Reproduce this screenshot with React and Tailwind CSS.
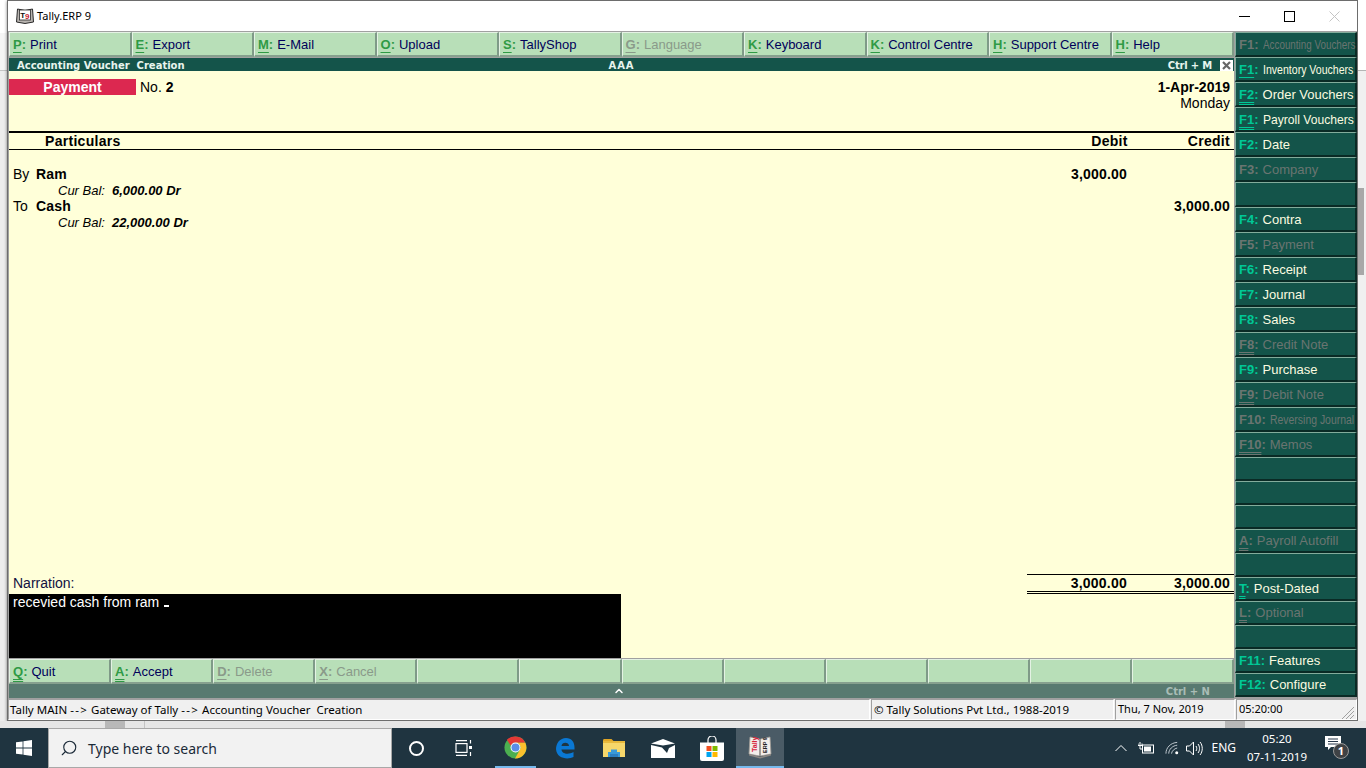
import React from 'react';
import { Search, ChevronUp } from 'lucide-react';

const topKeys = [
  ['P', 'Print', 1], ['E', 'Export', 1], ['M', 'E-Mail', 1], ['O', 'Upload', 1], ['S', 'TallyShop', 1],
  ['G', 'Language', 0], ['K', 'Keyboard', 1], ['K', 'Control Centre', 1], ['H', 'Support Centre', 1], ['H', 'Help', 1],
];

const bottomKeys = [
  ['Q', 'Quit', 1, 1], ['A', 'Accept', 1, 1], ['D', 'Delete', 0], ['X', 'Cancel', 0],
  [], [], [], [], [], [], [], [],
];

// key, label, enabled, underline (0 none, 1 single, 2 double), squeeze classes for long labels
const sideKeys = [
  ['F1', 'Accounting Vouchers', 0, 0, 'text-[12px] inline-block origin-left scale-x-[0.82]'],
  ['F1', 'Inventory Vouchers', 1, 1, 'text-[12px] inline-block origin-left scale-x-[0.88]'],
  ['F2', 'Order Vouchers', 1, 2], ['F1', 'Payroll Vouchers', 1, 2, 'inline-block origin-left scale-x-[0.93]'],
  ['F2', 'Date', 1, 0], ['F3', 'Company', 0, 0], [], ['F4', 'Contra', 1, 0], ['F5', 'Payment', 0, 0], ['F6', 'Receipt', 1, 0],
  ['F7', 'Journal', 1, 0], ['F8', 'Sales', 1, 0], ['F8', 'Credit Note', 0, 2], ['F9', 'Purchase', 1, 0], ['F9', 'Debit Note', 0, 2],
  ['F10', 'Reversing Journal', 0, 0, 'text-[12px] inline-block origin-left scale-x-[0.87]'], ['F10', 'Memos', 0, 2],
];

const sideKeysLower = [
  [], [], [], ['A', 'Payroll Autofill', 0, 2], [], ['T', 'Post-Dated', 1, 2], ['L', 'Optional', 0, 2], [],
  ['F11', 'Features', 1, 0], ['F12', 'Configure', 1, 0],
];

const arial = "font-['Liberation_Sans',Arial,sans-serif]";

const TopButton = ({ item }) => {
  const [k, label, on, dbl] = item;
  return (
    <div className={`h-[25px] flex items-center pl-[3px] pt-[1px] bg-[#b8dfb8] border-t border-l border-[#e4f2e4] border-r-2 border-r-[#7f9a88] border-b-2 border-b-[#86a08e] text-[13px] whitespace-nowrap ${arial}`}>
      {k && (
        <>
          <span className={`font-bold ${on ? 'text-[#2f9a45]' : 'text-[#8a9a8a]'}`}>
            <span className={`underline underline-offset-[3px] ${dbl ? 'decoration-double' : ''}`}>{k}</span>:
          </span>
          <span className={`ml-[4px] ${on ? 'text-[#00005a]' : 'text-[#8a9a8a]'}`}>{label}</span>
        </>
      )}
    </div>
  );
};

const SideButton = ({ item, tall }) => {
  const [k, label, on, line, squeeze] = item;
  const rule = line === 2 ? 'underline underline-offset-[3px] decoration-double' : line === 1 ? 'underline underline-offset-[3px]' : '';
  return (
    <div className={`${tall ? 'h-[25px] pt-[1px]' : 'h-[24px]'} flex items-center pl-[3px] bg-[#14544a] border-t border-l border-[#83ac9c] border-r-2 border-r-[#0a2a25] border-b-2 border-b-[#0a2a25] text-[13px] whitespace-nowrap ${arial}`}>
      {k && (
        <>
          <span className={`font-bold ${on ? 'text-[#00c896]' : 'text-[#6a7571]'}`}>
            <span className={rule}>{k}</span>:
          </span>
          <span className={`ml-[4px] ${squeeze || ''} ${on ? 'text-[#fbfbe0]' : 'text-[#6a7571]'}`}>{label}</span>
        </>
      )}
    </div>
  );
};

const Particular = ({ dir, name, bal, amount, side }) => (
  <>
    <div className="flex h-[16px] items-center text-[14px] text-black pl-[4px]">
      <span className="w-[23px]">{dir}</span>
      <span className="font-bold tracking-[0.2px]">{name}</span>
      <span className={`ml-auto font-bold tracking-[0.2px] ${side === 'dr' ? 'mr-[107px]' : 'mr-[4px]'}`}>{amount}</span>
    </div>
    <div className="flex h-[16px] pt-[1px] items-center text-[13px] italic text-black pl-[49px]">
      <span className="w-[54px]">Cur Bal:</span>
      <span className="font-bold">{bal}</span>
    </div>
  </>
);

const WinLogo = () => (
  <svg width="16" height="16" viewBox="0 0 16 16" fill="#fff">
    <path d="M0 2.300 6.600 1.400V7.600H0zM7.400 1.300 16 0V7.600H7.400zM0 8.400H6.600V14.600L0 13.700zM7.400 8.400H16V16L7.400 14.700z" />
  </svg>
);

const TaskView = () => (
  <svg width="18" height="16" viewBox="0 0 18 16" fill="none" stroke="#fff" strokeWidth="1.200">
    <path d="M1 .6H12M1 15.400H12" />
    <rect x="1" y="3.600" width="11" height="8.800" />
    <path d="M15.500 0V3.500M15.500 12V16" />
    <rect x="14" y="6" width="3" height="3" fill="#fff" stroke="none" />
  </svg>
);

const ChromeLogo = () => (
  <svg width="23" height="23" viewBox="0 0 24 24">
    <circle cx="12" cy="12" r="11.500" fill="#4caf50" />
    <path d="M12 .5A11.500 11.500 0 0 1 22.200 7H12A5 5 0 0 0 7.300 10.400L3 4A11.500 11.500 0 0 1 12 .5z" fill="#e53935" />
    <path d="M22.200 7A11.500 11.500 0 0 1 11.500 23.500L16.500 14.500A5 5 0 0 0 12 7z" fill="#fbc02d" />
    <circle cx="12" cy="12" r="5.200" fill="#fff" />
    <circle cx="12" cy="12" r="4.200" fill="#5c8ee6" />
  </svg>
);

const EdgeLogo = () => (
  <svg width="20" height="22" viewBox="0 0 20 22">
    <path d="M1 12.500C1 6 5 1 11 1c5.500 0 8.500 4 8.500 9.500v2H6.500c.2 4.500 7 5.500 12 2.500v5c-6 3-17 1.500-17.500-8zM6.500 9H14c0-4-7-4.500-7.500 0z" fill="#0a78d4" fillRule="evenodd" />
  </svg>
);

const FolderIcon = () => (
  <svg width="22" height="18" viewBox="0 0 22 18">
    <path d="M0 1.500C0 .7.5 0 1.300 0H8.500L10.500 2H0z" fill="#e0a526" />
    <rect y="2" width="22" height="16" fill="#f6d76b" />
    <rect y="2" width="22" height="2" fill="#e8b93c" />
    <path d="M5 18V13H8V10.500H14V13H17V18H14V15H8V18z" fill="#3a9ad9" />
    <rect x="7" y="15" width="8" height="3" fill="#2d7fc1" />
  </svg>
);

const MailIcon = () => (
  <svg width="24" height="19" viewBox="0 0 24 19" fill="#fff">
    <path d="M0 4.500 12 0 24 4.500 12 6.500zM0 6 11 8.500 16 14 18 9 24 6V19H0z" />
  </svg>
);

const StoreIcon = () => (
  <svg width="24" height="25" viewBox="0 0 24 25">
    <path d="M8 7V4a4 4 0 0 1 8 0V7" fill="none" stroke="#fff" strokeWidth="1.200" />
    <path d="M0 6.500H24V23a2 2 0 0 1-2 2H2a2 2 0 0 1-2-2z" fill="#fff" />
    <rect x="6.500" y="10" width="5" height="5" fill="#f25022" />
    <rect x="12.500" y="10" width="5" height="5" fill="#7fba00" />
    <rect x="6.500" y="16" width="5" height="5" fill="#00a4ef" />
    <rect x="12.500" y="16" width="5" height="5" fill="#ffb900" />
  </svg>
);

const TallyBook = () => (
  <svg width="24" height="24" viewBox="0 0 24 24">
    <path d="M2 2 11.500 4V21L1 19z" fill="#f2eeea" stroke="#a09a94" strokeWidth=".8" />
    <path d="M22 2 12.500 4V21L23 19z" fill="#f2eeea" stroke="#a09a94" strokeWidth=".8" />
    <path d="M1 19 12 22 23 19V20.500L12 23.500 1 20.500z" fill="#8c8782" />
    <text x="0" y="0" transform="translate(9 17) rotate(-90)" fontSize="7" fontWeight="700" fill="#d8233a" fontFamily="Liberation Sans">Tally</text>
    <text x="0" y="0" transform="translate(18.500 18) rotate(-90)" fontSize="5.500" fontWeight="700" fill="#222" fontFamily="Liberation Sans">ERP 9</text>
  </svg>
);

const TitleIcon = () => (
  <svg width="18" height="18" viewBox="0 0 18 18">
    <path d="M1.500 2 9 3.500 16.500 2 17.500 15 9 16.500.5 15z" fill="#b8b4b0" stroke="#2a2a2a" strokeWidth="1" />
    <rect x="3.500" y="3" width="11" height="10" fill="#fff" stroke="#2a2a2a" strokeWidth=".8" />
    <text x="4.200" y="10.500" fontSize="8" fontWeight="700" fill="#111" fontFamily="Liberation Sans">T</text>
    <text x="9" y="11.500" fontSize="8" fontWeight="700" fill="#c81e32" fontFamily="Liberation Sans">9</text>
  </svg>
);

const BatteryIcon = () => (
  <svg width="16" height="12" viewBox="0 0 16 12" fill="none" stroke="#fff">
    <rect x="4.500" y="3" width="11" height="8" />
    <rect x="6" y="4.500" width="7" height="5" fill="#fff" stroke="none" />
    <path d="M2 0V3M0 1.500V3.500H4V1.500M2 3.500V7H4.500" strokeWidth="1" />
  </svg>
);

const WifiIcon = () => (
  <svg width="15" height="14" viewBox="0 0 16 14" fill="none" stroke="#c8d0d6" strokeWidth="1">
    <path d="M1 13C1 6.500 6 1.500 13 1M4 13C4 8.500 8 4.500 13 4M7 13C7 10.500 10 7.500 13 7" />
    <circle cx="12.500" cy="12" r="1.600" fill="#fff" stroke="none" />
  </svg>
);

const VolumeIcon = () => (
  <svg width="17" height="15" viewBox="0 0 17 15" fill="none" stroke="#fff" strokeWidth="1">
    <path d="M.5 5H3.500L7.500 1V14L3.500 10H.5z" />
    <path d="M10 5C11 6.500 11 8.500 10 10M12 3C14 5.500 14 9.500 12 12M14 1C17 4.500 17 10.500 14 14" />
  </svg>
);

const NotifyIcon = () => (
  <div className="relative w-[24px] h-[24px]">
    <svg width="16" height="15" viewBox="0 0 16 15" className="absolute left-0 top-0" fill="#fff">
      <path d="M0 0H16V11H6L3 14V11H0z" />
      <path d="M3 3H13M3 5.500H13M3 8H13" stroke="#27374a" strokeWidth="1" />
    </svg>
    <div className="absolute left-[8px] top-[7px] w-[16px] h-[16px] rounded-full bg-[#3f4245] border border-[#9a9a9a] text-white text-[11px] font-bold flex items-center justify-center font-['Noto_Sans',sans-serif]">1</div>
  </div>
);

const ResizeGrip = () => (
  <svg width="12" height="12" viewBox="0 0 12 12" stroke="#a0a0a0" className="ml-auto self-end">
    <path d="M12 0 0 12M12 4 4 12M12 8 8 12" />
  </svg>
);

const Arrow = () => <span className="tracking-[1.3px]">--&gt;</span>;

export default function App() {
  return (
    <div className="w-[1366px] h-[768px] flex flex-col overflow-hidden bg-[#f0f0f0]">
      <div className="flex-1 min-h-0 flex">
        {/* page behind the window, left edge */}
        <div className="w-[7px] shrink-0 flex flex-col">
          <div className="h-[33px] bg-white" />
          <div className="h-[37px] bg-[#f5f5f5] border-b border-[#c4c4c4] box-content" />
          <div className="flex-1 bg-[#ededed]" />
        </div>
        {/* tally window */}
        <div className="flex-1 min-w-0 flex flex-col bg-[#a0a0a0] border border-[#6d6d6d] shadow-[0_1px_3px_rgba(0,0,0,.5)]">
          <div className="h-[30px] bg-white flex items-center pl-[8px] shrink-0">
            <TitleIcon />
            <span className="ml-[3px] text-[11px] text-black font-['Noto_Sans',sans-serif]">Tally.ERP 9</span>
            <div className="ml-auto flex items-center text-black">
              <div className="w-[45px] flex justify-center"><div className="w-[11px] h-px bg-black" /></div>
              <div className="w-[45px] flex justify-center"><div className="w-[11px] h-[11px] border border-black" /></div>
              <div className="w-[45px] flex justify-center">
                <svg width="11" height="11" viewBox="0 0 11 11" stroke="#c4c4c4"><path d="M.5.500 10.500 10.500M10.500.500.500 10.500" /></svg>
              </div>
            </div>
          </div>
          <div className="flex-1 min-h-0 flex pt-[1px] pb-[1px]">
            <div className="flex-1 min-w-0 flex flex-col pl-[1px] pr-[1px]">
              <div className="grid grid-cols-10 shrink-0">
                {topKeys.map((item, i) => <TopButton key={i} item={item} />)}
              </div>
              <div className="h-[13px] mt-[1px] pb-[1px] shrink-0 bg-[#14544a] grid grid-cols-[1fr_auto_1fr] items-center text-[10px] font-bold text-[#e8f4ee] font-['DejaVu_Sans',sans-serif] pl-[8px] pr-[8px]">
                <span>Accounting Voucher&nbsp; Creation</span>
                <span className="tracking-[1px]">AAA</span>
                <span className="flex justify-end items-center -mr-[8px]">
                  <span className="tracking-[-0.2px]">Ctrl + M</span>
                  <span className="ml-[8px] w-[13px] h-[12px] bg-white flex items-center justify-center mr-px">
                    <svg width="9" height="9" viewBox="0 0 9 9" stroke="#666" strokeWidth="2.200"><path d="M1 1 8 8M8 1 1 8" /></svg>
                  </span>
                </span>
              </div>
              <div className={`flex-1 min-h-0 bg-[#ffffd9] flex flex-col ${arial} text-black`}>
                <div className="h-[60px] shrink-0 flex pt-[8px] justify-between">
                  <div className="flex items-start">
                    <div className="w-[127px] h-[16px] bg-[#dc2850] text-white font-bold text-[14px] leading-[16px] text-center">Payment</div>
                    <span className="ml-[4px] text-[14px] leading-[16px]">No. <b>2</b></span>
                  </div>
                  <div className="text-right text-[14px] leading-[16px] pr-[4px]">
                    <div className="font-bold">1-Apr-2019</div>
                    <div>Monday</div>
                  </div>
                </div>
                <div className="h-[16px] shrink-0 border-t-2 border-black flex items-center font-bold text-[14px] tracking-[0.3px] pl-[36px] box-content border-b border-b-black">
                  <span>Particulars</span>
                  <span className="ml-auto mr-[60px]">Debit</span>
                  <span className="mr-[4px]">Credit</span>
                </div>
                <div className="flex-1 min-h-0 pt-[16px]">
                  <Particular dir="By" name="Ram" bal="6,000.00 Dr" amount="3,000.00" side="dr" />
                  <Particular dir="To" name="Cash" bal="22,000.00 Dr" amount="3,000.00" side="cr" />
                </div>
                <div className="h-[20px] shrink-0 flex items-center">
                  <span className="pl-[4px] pb-[2px] text-[14px] text-[#101040]">Narration:</span>
                  <div className="ml-auto w-[207px] h-[20px] border-t border-black border-b-[3px] border-b-black border-double flex items-center justify-end font-bold text-[14px] tracking-[0.2px] pr-[4px]">
                    <span className="mr-[47px]">3,000.00</span>
                    <span>3,000.00</span>
                  </div>
                </div>
                <div className="h-[64px] w-[612px] shrink-0 bg-black text-white text-[14px] leading-[16px] pl-[4px]">
                  recevied cash from ram <span className="inline-block w-[5px] h-[2px] ml-[1px] bg-white" />
                </div>
              </div>
              <div className="grid grid-cols-12 shrink-0 mt-[1px]">
                {bottomKeys.map((item, i) => <TopButton key={i} item={item} />)}
              </div>
              <div className="h-[14px] shrink-0 bg-[#587a70] relative flex items-center justify-end text-[10px] font-bold text-[#a9bdb6] font-['DejaVu_Sans',sans-serif] pr-[24px]">
                <ChevronUp size={12} strokeWidth={3} color="#fff" className="absolute left-[604px] top-[1px]" />
                Ctrl + N
              </div>
            </div>
            <div className="w-[122px] shrink-0 flex flex-col">
              {sideKeys.map((item, i) => <SideButton key={i} item={item} tall />)}
              {sideKeysLower.map((item, i) => <SideButton key={i} item={item} />)}
            </div>
          </div>
          <div className="h-[21px] shrink-0 bg-[#f0f0f0] flex text-[11.5px] text-black font-['Noto_Sans',sans-serif] whitespace-nowrap">
            <div className="w-[862px] px-[1px] flex items-center border border-[#a0a0a0] border-r-white border-b-white">
              <span>Tally MAIN <Arrow /> Gateway of Tally <Arrow /> Accounting Voucher&nbsp; Creation</span>
            </div>
            <div className="w-[243px] ml-px px-[2px] flex items-center border border-[#a0a0a0] border-r-white border-b-white">© Tally Solutions Pvt Ltd., 1988-2019</div>
            <div className="w-[120px] ml-px px-[2px] flex items-center text-[11px] border border-[#a0a0a0] border-r-white border-b-white">Thu, 7 Nov, 2019</div>
            <div className="flex-1 ml-px px-[2px] flex items-center text-[11px] border border-[#a0a0a0] border-r-white border-b-white">
              05:20:00
              <ResizeGrip />
            </div>
          </div>
        </div>
        {/* page behind the window, right edge with its scrollbar */}
        <div className="w-[8px] shrink-0 flex flex-col">
          <div className="h-[70px] bg-white border-b border-[#b4b4b4] box-content" />
          <div className="h-[117px] bg-[#f0f0f0]" />
          <div className="h-[87px] w-[6px] bg-[#a8a8a8]" />
          <div className="flex-1 bg-[#f0f0f0]" />
        </div>
      </div>
      {/* sliver of the page between window and taskbar */}
      <div className="h-[7px] shrink-0 flex bg-[#e6e6e6]">
        <div className="w-[105px]" />
        <div className="w-[20px] bg-[#b8b8b8]" />
        <div className="w-[20px] border-r border-[#c4c4c4]" />
        <div className="w-[1080px]" />
        <div className="w-[20px] bg-[#b8b8b8]" />
      </div>
      <div className="h-[40px] shrink-0 bg-[#1f3440] flex items-center text-white font-['Noto_Sans',sans-serif]">
        <div className="w-[48px] flex justify-center"><WinLogo /></div>
        <div className="w-[344px] h-full bg-[#f2f2f2] border border-[#a8a8a8] flex items-center pl-[11px] text-[#1b2a38] text-[14px]">
          <Search size={18} strokeWidth={1.500} className="-scale-x-100" />
          <span className="ml-[10px]">Type here to search</span>
        </div>
        <div className="w-[48px] flex justify-center"><div className="w-[15px] h-[15px] rounded-full border-2 border-white" /></div>
        <div className="w-[48px] flex justify-center"><TaskView /></div>
        <div className="w-[3px]" />
        <div className="w-[49px] h-full px-[4px]">
          <div className="h-full flex items-center justify-center border-b-2 border-[#76b9ed]"><ChromeLogo /></div>
        </div>
        <div className="w-[49px] flex justify-center"><EdgeLogo /></div>
        <div className="w-[49px] flex justify-center"><FolderIcon /></div>
        <div className="w-[49px] flex justify-center"><MailIcon /></div>
        <div className="w-[49px] flex justify-center"><StoreIcon /></div>
        <div className="w-[48px] h-full flex items-center justify-center bg-[#4a5b66] border-b-2 border-[#76b9ed]"><TallyBook /></div>
        <div className="ml-auto flex items-center">
          <svg width="12" height="8" viewBox="0 0 12 8" fill="none" stroke="#fff"><path d="M.5 7 6 1.500 11.500 7" /></svg>
          <span className="ml-[11px]"><BatteryIcon /></span>
          <span className="ml-[11px]"><WifiIcon /></span>
          <span className="ml-[6px]"><VolumeIcon /></span>
          <span className="ml-[8px] text-[12px]">ENG</span>
          <div className="ml-[6px] w-[70px] whitespace-nowrap text-center text-[11.5px] leading-[18px]">
            <div>05:20</div>
            <div>07-11-2019</div>
          </div>
          <div className="ml-[13px] mr-[17px]"><NotifyIcon /></div>
        </div>
      </div>
    </div>
  );
}
